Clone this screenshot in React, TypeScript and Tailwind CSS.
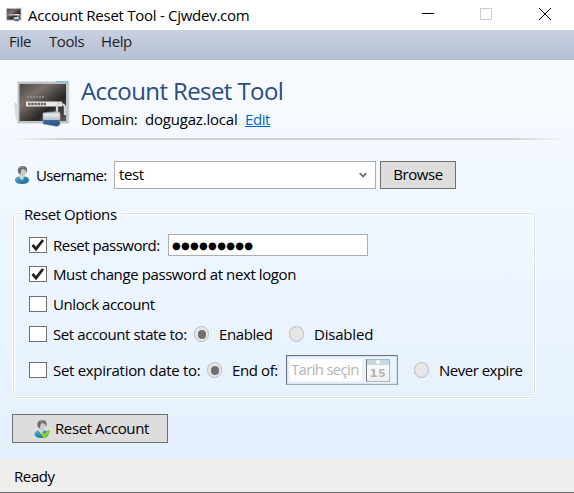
import { useState } from 'react'
import type { ReactNode } from 'react'

const MENU = [
  { name: 'File', box: 'w-10' },
  { name: 'Tools', box: 'w-[52px]' },
  { name: 'Help', box: 'w-12' },
]

function ServerIcon({ className }: { className: string }) {
  return (
    <svg className={className} viewBox="0 0 58 50" fill="none">
      <defs>
        <linearGradient id="screen" x1="0" y1="0" x2="1" y2="1">
          <stop stopColor="#4d4744" />
          <stop offset=".3" stopColor="#79706b" />
          <stop offset=".65" stopColor="#2b2725" />
          <stop offset="1" stopColor="#5d5957" />
        </linearGradient>
        <linearGradient id="lock" x1="0" y1="0" x2="0" y2="1">
          <stop stopColor="#a9afb4" />
          <stop offset=".2" stopColor="#e6e9eb" />
          <stop offset=".55" stopColor="#b4c0ca" />
          <stop offset=".6" stopColor="#3a68a0" />
          <stop offset="1" stopColor="#244a7c" />
        </linearGradient>
      </defs>
      <path d="M1 22l4 3v18h5L3 40z" fill="#d5d9dd" />
      <path d="M4.5 1.5h51.5v42h-51.5z" fill="#bfc3c5" stroke="#dde1e4" />
      <path d="M43 2h12" stroke="#8cc3e4" strokeWidth="2" />
      <path d="M6.5 4h46.5v37H6.5z" fill="url(#screen)" />
      <path d="M14 17h18" stroke="#8f8986" strokeWidth="2" strokeDasharray="2 1" />
      <path d="M13 21.5h36v5H13z" fill="#e9e9e9" />
      <path d="M15 24h18" stroke="#6b6662" strokeWidth="2.5" strokeDasharray="2.5 .7" />
      <path d="M44 36V26q0-3 3-2.5 5 1 5 4V35" stroke="#d4d7d8" strokeWidth="2.2" />
      <path d="M30 33l15-1.5 2 1.5v12l-3 1.5-14-2.5z" fill="url(#lock)" stroke="#a3abb3" strokeWidth=".7" />
    </svg>
  )
}

function UserIcon({ className, check }: { className: string; check?: boolean }) {
  return (
    <svg className={className} viewBox="0 0 16 20" fill="none">
      <defs>
        <linearGradient id="shirt" x1="0" y1="0" x2="1" y2="1">
          <stop stopColor="#64a9cb" />
          <stop offset=".6" stopColor="#2682ad" />
          <stop offset="1" stopColor="#17658c" />
        </linearGradient>
      </defs>
      <path d="M1 15.5q0-4 5-4h4q5 0 5 4-1 3.5-7 3.5t-7-3.5z" fill="url(#shirt)" />
      <path d="M5.5 9h5l-1 4.500-1.5 2-2.5-3z" fill="#d2d5d7" />
      <ellipse cx="8.5" cy="6" rx="4" ry="5.2" fill="#cbcbcb" />
      <path d="M4 7.5Q3 1 8.5 1q6 0 4.3 7-.8-3.5-3.8-4-2 0-2 2l-.8 3.5z" fill="#6a6a6a" />
      <path d="M6 2.8q2-1.5 4-.8" stroke="#a0a0a0" />
      {check && <path d="M8 14l3 3.5 5-6" stroke="#93d424" strokeWidth="3" />}
    </svg>
  )
}

function Check({ checked, onToggle, className, children }: { checked: boolean; onToggle: () => void; className: string; children: ReactNode }) {
  return (
    <button role="checkbox" aria-checked={checked} onClick={onToggle} className="flex items-center">
      <span className="mr-1.5 h-4 w-[18px] shrink-0 border border-[#707070] bg-white">
        {checked && (
          <svg className="h-3.5 w-4" viewBox="0 0 16 14" fill="none">
            <path d="M2.5 7l3.5 4 7-9" stroke="#212121" strokeWidth="2.8" />
          </svg>
        )}
      </span>
      <span className={`whitespace-nowrap text-left ${className}`}>{children}</span>
    </button>
  )
}

function Radio({ selected }: { selected?: boolean }) {
  return (
    <span className="flex h-4 w-[15px] shrink-0 items-center justify-center rounded-full border border-[#bcbcbc] bg-[#e6e6e6]">
      {selected && <span className="h-[9px] w-2 rounded-full bg-[#707070]" />}
    </span>
  )
}

export default function App() {
  const [options, setOptions] = useState({ password: true, change: true, unlock: false, state: false, expiration: false })
  const toggle = (key: keyof typeof options) => setOptions(prev => ({ ...prev, [key]: !prev[key] }))

  return (
    <div className="flex h-[493px] w-[574px] flex-col overflow-hidden border-b border-[#6b6b6b] bg-white font-['Open_Sans',sans-serif] text-[15px] leading-5 tracking-[-0.4px] text-black">
      {/* Title bar */}
      <header className="flex h-[30px] shrink-0 items-center pl-[5px]">
        <ServerIcon className="mr-1.5 h-4 w-[17px]" />
        <h1 className="flex-1 pb-px whitespace-nowrap tracking-[-0.27px]">Account Reset Tool - Cjwdev.com</h1>
        <svg className="h-[30px] w-[160px]" viewBox="0 0 160 30" fill="none" shapeRendering="crispEdges">
          <path d="M8 13.5h12" stroke="#000" />
          <path d="M66.5 8.5h11v11h-11z" stroke="#ccc" />
          <path d="M125 8l12 12M137 8l-12 12" stroke="#000" shapeRendering="auto" />
        </svg>
      </header>

      <nav className="flex h-[30px] shrink-0 bg-linear-to-b from-[#c9d1e1] to-[#b4c0d4] pt-px pl-[9px] text-[#1e1e1e]">
        {MENU.map(item => (
          <button key={item.name} className={`h-5 text-left ${item.box}`}>{item.name}</button>
        ))}
      </nav>

      <main className="flex flex-1 flex-col bg-linear-to-b from-[#f7fbff] to-[#e4f0fe]">
        <div className="flex h-[78px] pt-5 pl-[13px]">
          <ServerIcon className="mr-[10px] h-[50px] w-[58px]" />
          <div>
            <h2 className="-mt-1 text-2xl leading-[30px] tracking-[-0.6px] whitespace-nowrap text-[#2b4c7e]">Account Reset Tool</h2>
            <p className="mt-[3px] flex">
              <span className="w-16">Domain:</span>
              <span className="w-[100px] tracking-[-0.2px]">dogugaz.local</span>
              <a className="text-[#0066cc] underline">Edit</a>
            </p>
          </div>
        </div>
        <div className="mr-[10px] ml-3 flex h-0.5">
          <div className="w-[52px] bg-linear-to-r from-transparent to-[#d1d1d3]" />
          <div className="flex-1 bg-[#d1d1d3]" />
          <div className="w-[52px] bg-linear-to-l from-transparent to-[#d1d1d3]" />
        </div>

        <div className="mt-[21px] flex h-7 items-center pl-[14px]">
          <UserIcon className="mr-1.5 h-5 w-4" />
          <span className="w-[78px] tracking-[-0.65px]">Username:</span>
          <div className="flex h-7 w-[262px] items-center justify-between border border-[#acacac] bg-white pr-2 pl-1">
            <span className="pb-0.5">test</span>
            <svg className="h-2 w-2" viewBox="0 0 8 8" fill="none">
              <path d="M.7 2l3.3 3.5L7.3 2" stroke="#606060" strokeWidth="1.6" />
            </svg>
          </div>
          <button className="ml-1 h-7 w-[76px] border border-[#707070] bg-[#ddd] pb-0.5">Browse</button>
        </div>

        {/* Reset options */}
        <fieldset className="mt-[14px] ml-3 h-[196px] w-[524px]">
          <div className="flex h-[11px] items-start pt-px pl-2.5">
            <span className="relative z-10 h-5 w-[100px] bg-[#eff6ff] pl-0.5 whitespace-nowrap">Reset Options</span>
          </div>
          <div className="-mt-0.5 h-[187px] rounded-[5px] border border-white">
            <div className="h-full rounded border border-[#d5dfe5]">
              <div className="h-full rounded-[3px] border border-white pt-[19px] pl-[14px]">
                <div className="flex h-[22px] items-center">
                  <Check checked={options.password} onToggle={() => toggle('password')} className="w-[115px] tracking-[-0.5px]">Reset password:</Check>
                  <div className="flex h-[22px] w-[200px] items-center border border-[#abadb3] bg-white pt-0.5 pl-[3px] font-['DejaVu_Sans',sans-serif] text-[10px] tracking-[0.3px]">●●●●●●●●●</div>
                </div>
                <div className="mt-2 flex h-5 items-center">
                  <Check checked={options.change} onToggle={() => toggle('change')} className="w-[260px]">Must change password at next logon</Check>
                </div>
                <div className="mt-2.5 flex h-5 items-center">
                  <Check checked={options.unlock} onToggle={() => toggle('unlock')} className="w-[115px]">Unlock account</Check>
                </div>
                <div className="mt-2.5 flex h-5 items-center">
                  <Check checked={options.state} onToggle={() => toggle('state')} className="w-[141px]">Set account state to:</Check>
                  <Radio selected />
                  <span className="ml-2.5 w-[70px]">Enabled</span>
                  <Radio />
                  <span className="ml-2.5 tracking-[-0.2px]">Disabled</span>
                </div>
                <div className="mt-[11px] flex h-[30px] items-center">
                  <Check checked={options.expiration} onToggle={() => toggle('expiration')} className="w-[154px] tracking-[-0.3px]">Set expiration date to:</Check>
                  <Radio selected />
                  <span className="ml-2.5 w-[54px]">End of:</span>
                  <div className="mr-4 flex h-[30px] w-[112px] items-center border border-[#9dabb9] border-t-[#647486] border-r-[#8492a2] border-l-[#647486] pl-[3px] shadow-[inset_0_0_0_1px_#d7e3ef]">
                    <span className="mr-1 h-[22px] w-[72px] bg-white pl-px tracking-[-0.7px] whitespace-nowrap text-[#b5b5b5]">Tarih seçin</span>
                    <div className="flex h-[23px] w-6 flex-col border border-[#b5b5b5] border-l-[#777] bg-linear-to-b from-white to-[#eee]">
                      <div className="flex h-[5px] shrink-0 items-center justify-center bg-[#c5d6e4]">
                        <span className="size-1 rounded-full bg-white" />
                      </div>
                      <span className="text-center font-['DejaVu_Sans',sans-serif] text-[11px] leading-[17px] font-bold tracking-[0.7px] text-[#b4b4b4]">15</span>
                    </div>
                  </div>
                  <Radio />
                  <span className="ml-2.5 tracking-[-0.5px] whitespace-nowrap">Never expire</span>
                </div>
              </div>
            </div>
          </div>
        </fieldset>

        <button className="mt-[15px] ml-3 flex h-[29px] w-[156px] items-center border border-[#707070] bg-[#ddd] pl-5">
          <UserIcon check className="mr-[5px] h-5 w-[17px]" />
          <span className="pb-0.5">Reset Account</span>
        </button>
      </main>

      <footer className="h-[33px] shrink-0 bg-[#f0eded] pt-[7px] pl-[14px]">Ready</footer>
    </div>
  )
}
